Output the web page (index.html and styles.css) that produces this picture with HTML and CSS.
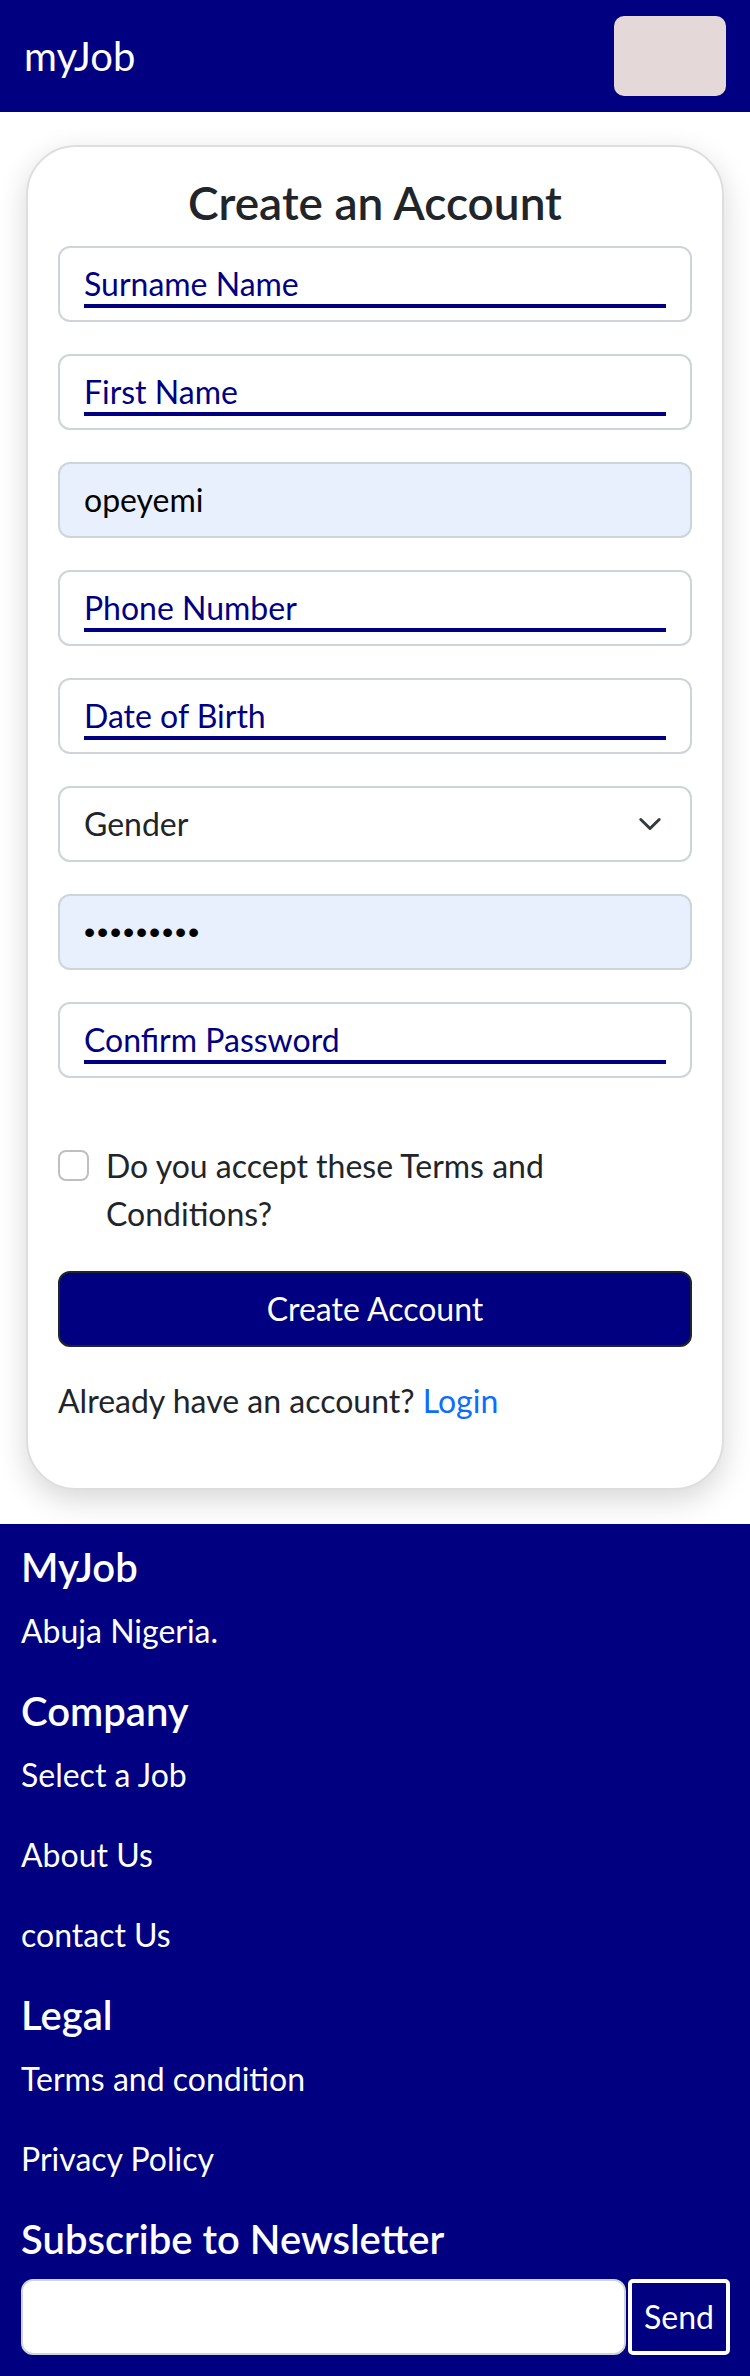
FILE: index.html
```html
<!DOCTYPE html>
<html lang="en">
<head>
<meta charset="utf-8">
<title>myJob - Create an Account</title>
<link rel="stylesheet" href="styles.css">
</head>
<body>
<header class="navbar">
  <a class="brand" href="#">myJob</a>
  <button class="toggler" type="button" aria-label="Toggle navigation"></button>
</header>

<main class="page">
  <section class="card">
    <h3 class="card-title">Create an Account</h3>
    <form class="form">
      <div class="field"><span class="field-label">Surname Name</span></div>
      <div class="field"><span class="field-label">First Name</span></div>
      <div class="field field-filled"><span class="field-value">opeyemi</span></div>
      <div class="field"><span class="field-label">Phone Number</span></div>
      <div class="field"><span class="field-label">Date of Birth</span></div>
      <div class="field field-select">
        <span class="field-text">Gender</span>
        <svg class="chevron" width="32" height="24" viewBox="0 0 32 24" aria-hidden="true"><polyline points="6.8,7.5 16,16.5 25.2,7.5" fill="none" stroke="#343a40" stroke-width="3" stroke-linecap="round" stroke-linejoin="round"/></svg>
      </div>
      <div class="field field-filled"><span class="field-dots">•••••••••</span></div>
      <div class="field field-last"><span class="field-label">Confirm Password</span></div>

      <label class="check">
        <span class="check-box"></span>
        <span class="check-text">Do you accept these Terms and Conditions?</span>
      </label>

      <button class="btn-primary" type="button">Create Account</button>
      <p class="login-text">Already have an account? <a class="login-link" href="#">Login</a></p>
    </form>
  </section>
</main>

<footer class="footer">
  <h5 class="footer-title">MyJob</h5>
  <p class="footer-text">Abuja Nigeria.</p>

  <h5 class="footer-title">Company</h5>
  <a class="footer-link" href="#">Select a Job</a>
  <a class="footer-link" href="#">About Us</a>
  <a class="footer-link" href="#">contact Us</a>

  <h5 class="footer-title">Legal</h5>
  <a class="footer-link" href="#">Terms and condition</a>
  <a class="footer-link" href="#">Privacy Policy</a>

  <h5 class="footer-title">Subscribe to Newsletter</h5>
  <div class="newsletter">
    <input class="newsletter-input" type="email" aria-label="Email">
    <button class="newsletter-btn" type="button">Send</button>
  </div>
</footer>
</body>
</html>
```
FILE: styles.css
```css
* { box-sizing: border-box; }

body {
  margin: 0;
  font-family: Lato, "Liberation Sans", sans-serif;
  font-size: 32px;
  line-height: 1.5;
  color: #212529;
  background: #fff;
}

/* header */
.navbar {
  height: 112px;
  background: #000080;
  display: flex;
  align-items: center;
  justify-content: space-between;
  padding: 0 24px;
}
.brand {
  color: #fff;
  font-size: 40px;
  line-height: 60px;
  text-decoration: none;
}
.toggler {
  width: 112px;
  height: 80px;
  padding: 0;
  border: 0;
  border-radius: 10px;
  background: #e4d8d8;
}

/* card */
.page {
  padding: 33px 26px 34px;
}
.card {
  background: #fff;
  border: 2px solid #dedede;
  border-radius: 50px;
  padding: 28px 30px 63px;
  box-shadow: 0 10px 30px rgba(0, 0, 0, 0.16);
}
.card-title {
  margin: 0 0 16px;
  text-align: center;
  font-size: 46px;
  line-height: 55px;
  font-weight: 600;
  color: #212529;
}
.form { margin: 0; }

.field {
  height: 76px;
  border: 2px solid #ced4da;
  border-radius: 12px;
  padding: 12px 24px;
  margin-bottom: 32px;
  background: #fff;
}
.field-label {
  display: block;
  line-height: 48px;
  color: #000080;
  box-shadow: inset 0 -4px 0 #000080;
}
.field-filled { background: #e8f0fe; }
.field-value {
  display: block;
  line-height: 48px;
  color: #000;
}
.field-dots {
  display: block;
  font-family: "Liberation Sans", Arial, sans-serif;
  line-height: 48px;
  color: #000;
  letter-spacing: 1.8px;
}
.field-select {
  display: flex;
  align-items: center;
  justify-content: space-between;
}
.field-text {
  line-height: 48px;
  color: #212529;
}
.chevron { display: block; }

/* checkbox */
.check {
  display: flex;
  align-items: flex-start;
  margin: 64px 0 33px;
}
.field-last { margin-bottom: 0; }
.check-box {
  flex: none;
  width: 31px;
  height: 31px;
  margin: 8px 17px 0 0;
  border: 2px solid #bfbfbf;
  border-radius: 8px;
  background: #fff;
}
.check-text { line-height: 48px; }

.btn-primary {
  display: block;
  width: 100%;
  height: 76px;
  background: #000080;
  color: #fff;
  border: 2px solid #212529;
  border-radius: 12px;
  font: inherit;
  line-height: 48px;
}
.login-text {
  margin: 30px 0 0;
  line-height: 48px;
}
.login-link {
  color: #0d6efd;
  text-decoration: none;
}

/* footer */
.footer {
  background: #000080;
  color: #fff;
  padding: 19px 20px 21px 21px;
}
.footer-title {
  margin: 0 0 16px;
  font-size: 40px;
  line-height: 48px;
  font-weight: 600;
}
.footer-text {
  margin: 0 0 32px;
  line-height: 48px;
}
.footer-link {
  display: block;
  color: #fff;
  text-decoration: none;
  line-height: 48px;
  margin-bottom: 32px;
}
.newsletter {
  display: flex;
  gap: 2px;
}
.newsletter-input {
  flex: 1;
  min-width: 0;
  height: 76px;
  border: 2px solid #ced4da;
  border-radius: 12px;
  background: #fff;
  font: inherit;
  padding: 12px 24px;
}
.newsletter-btn {
  flex: none;
  width: 102px;
  height: 76px;
  border: 4px solid #fff;
  border-radius: 5px;
  background: #000080;
  color: #fff;
  font: inherit;
  padding: 0;
}
```
